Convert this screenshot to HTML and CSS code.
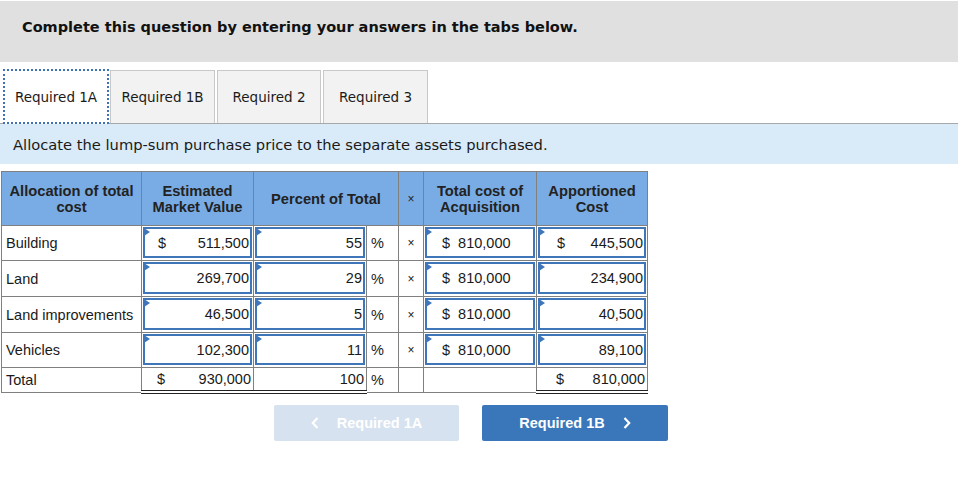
FILE: index.html
```html
<!DOCTYPE html>
<html>
<head>
<meta charset="utf-8">
<link rel="stylesheet" href="styles.css">
</head>
<body>
<div class="page">
  <div class="qhead">Complete this question by entering your answers in the tabs below.</div>
  <div class="tabs">
    <div class="tab active">Required 1A</div>
    <div class="tab t2">Required 1B</div>
    <div class="tab t3">Required 2</div>
    <div class="tab t4">Required 3</div>
  </div>
  <div class="band">Allocate the lump-sum purchase price to the separate assets purchased.</div>
  <table class="grid">
    <colgroup>
      <col class="c1"><col class="c2"><col class="c3"><col class="c4"><col class="c5"><col class="c6"><col class="c7">
    </colgroup>
    <thead>
      <tr>
        <th>Allocation of total<br>cost</th>
        <th>Estimated<br>Market Value</th>
        <th colspan="2">Percent of Total</th>
        <th class="xh">×</th>
        <th>Total cost of<br>Acquisition</th>
        <th>Apportioned<br>Cost</th>
      </tr>
    </thead>
    <tbody>
      <tr class="r35">
        <td class="lbl">Building</td>
        <td class="in"><div class="inp money"><span class="cur">$</span><span>511,500</span></div></td>
        <td class="in"><div class="inp num">55</div></td>
        <td class="pct">%</td>
        <td class="x">×</td>
        <td class="in"><div class="inp tc">$&nbsp; 810,000</div></td>
        <td class="in"><div class="inp money ap"><span class="cur">$</span><span>445,500</span></div></td>
      </tr>
      <tr class="r36">
        <td class="lbl">Land</td>
        <td class="in"><div class="inp num">269,700</div></td>
        <td class="in"><div class="inp num">29</div></td>
        <td class="pct">%</td>
        <td class="x">×</td>
        <td class="in"><div class="inp tc">$&nbsp; 810,000</div></td>
        <td class="in"><div class="inp num">234,900</div></td>
      </tr>
      <tr class="r36">
        <td class="lbl">Land improvements</td>
        <td class="in"><div class="inp num">46,500</div></td>
        <td class="in"><div class="inp num">5</div></td>
        <td class="pct">%</td>
        <td class="x">×</td>
        <td class="in"><div class="inp tc">$&nbsp; 810,000</div></td>
        <td class="in"><div class="inp num">40,500</div></td>
      </tr>
      <tr class="r35">
        <td class="lbl">Vehicles</td>
        <td class="in"><div class="inp num">102,300</div></td>
        <td class="in"><div class="inp num">11</div></td>
        <td class="pct">%</td>
        <td class="x">×</td>
        <td class="in"><div class="inp tc">$&nbsp; 810,000</div></td>
        <td class="in"><div class="inp num">89,100</div></td>
      </tr>
      <tr class="total">
        <td class="lbl">Total</td>
        <td class="dbl"><div class="cell money"><span class="cur">$</span><span>930,000</span></div></td>
        <td class="dbl"><div class="cell num">100</div></td>
        <td class="pct">%</td>
        <td></td>
        <td></td>
        <td class="dbl"><div class="cell money ap"><span class="cur">$</span><span>810,000</span></div></td>
      </tr>
    </tbody>
  </table>
  <div class="nav">
    <button class="btn prev">
      <svg width="8" height="12" viewBox="0 0 8 12"><path d="M6.5 1 L1.8 6 L6.5 11" fill="none" stroke="#fff" stroke-width="2.2"/></svg>
      <span>Required 1A</span>
    </button>
    <button class="btn next">
      <span>Required 1B</span>
      <svg width="8" height="12" viewBox="0 0 8 12"><path d="M1.5 1 L6.2 6 L1.5 11" fill="none" stroke="#fff" stroke-width="2.2"/></svg>
    </button>
  </div>
</div>
</body>
</html>
```

FILE: styles.css
```css
html, body {
  margin: 0;
  padding: 0;
  background: #fff;
}
.page {
  width: 958px;
  font-family: "DejaVu Sans", Verdana, sans-serif;
  color: #111;
}
.qhead {
  height: 61px;
  margin-top: 1px;
  background: #e0e0e0;
  padding-left: 22px;
  box-sizing: border-box;
  display: flex;
  align-items: center;
  font-weight: bold;
  font-size: 14.5px;
  color: #111;
  padding-bottom: 9px;
}
.tabs {
  display: flex;
  margin-top: 8px;
  padding-left: 3px;
  border-bottom: 1px solid #a8a8a8;
  height: 53px;
  box-sizing: content-box;
}
.tab {
  width: 105px;
  height: 53px;
  box-sizing: border-box;
  border: 1px solid #c8c8c8;
  border-bottom: none;
  background: #f2f2f2;
  display: flex;
  align-items: center;
  justify-content: center;
  font-size: 13.5px;
  color: #1a1a1a;
}
.tab.t2 { margin-left: 1px; }
.tab.t3 { margin-left: 2px; width: 104px; }
.tab.t4 { margin-left: 2px; }
.tab.active {
  width: 106px;
  background: #fff;
  border: 2px dotted #3d72b4;
  height: 55px;
  margin-top: -1px;
  margin-bottom: -1px;
}
.band {
  height: 40px;
  background: #d9eaf8;
  display: flex;
  align-items: center;
  padding-left: 13px;
  font-size: 14.7px;
  color: #1a1a1a;
}
.grid {
  margin-top: 7px;
  margin-left: 1px;
  border-collapse: collapse;
  table-layout: fixed;
  width: 647px;
  font-family: "Liberation Sans", Arial, sans-serif;
  font-size: 14.5px;
  color: #1a1a1a;
}
.c1 { width: 140px; }
.c2 { width: 112px; }
.c3 { width: 113px; }
.c4 { width: 32px; }
.c5 { width: 25px; }
.c6 { width: 113px; }
.c7 { width: 111px; }
.grid th, .grid td {
  border: 1px solid #808080;
  padding: 0;
}
.grid th {
  background: #79ace4;
  height: 53px;
  font-weight: bold;
  font-size: 14.7px;
  line-height: 16px;
  color: #222;
  text-align: center;
}
.grid th.xh {
  font-size: 12px;
  font-weight: normal;
}
.lbl { padding-left: 4px !important; }
.in { padding: 1px 1px 2px 1px !important; }
.inp {
  position: relative;
  box-sizing: border-box;
  height: 31px;
  border: 2px solid #3f76ba;
  background: #fff;
  display: flex;
  align-items: center;
  padding-right: 1px;
}
.r36 .inp { height: 32px; }
.inp::before {
  content: "";
  position: absolute;
  left: -1px;
  top: -1px;
  width: 0;
  height: 0;
  border-top: 4px solid transparent;
  border-bottom: 4px solid transparent;
  border-left: 6px solid #3f76ba;
}
.money {
  justify-content: space-between;
  padding-left: 13px;
}
.money.ap { padding-left: 17px; }
.num { justify-content: flex-end; }
.tc {
  padding-left: 15px;
}
.pct {
  padding-left: 4px !important;
}
.x {
  text-align: center;
  font-size: 12px;
}
.cell {
  display: flex;
  align-items: center;
  height: 22px;
  padding-right: 2px;
}
.cell.money { padding-left: 15px; }
.cell.money.ap { padding-left: 19px; }
.dbl { border-bottom: 4px double #222 !important; }
.nav {
  display: flex;
  margin-top: 11px;
  padding-left: 274px;
  gap: 23px;
}
.btn {
  width: 185px;
  height: 36px;
  border: none;
  border-radius: 2px;
  display: flex;
  align-items: center;
  justify-content: center;
  font-family: "Liberation Sans", Arial, sans-serif;
  font-weight: bold;
  font-size: 14.5px;
  color: #fff;
  padding: 0;
  gap: 18px;
}
.btn.prev { background: #d6e2f0; }
.btn.next {
  width: 186px;
  background: #3a76ba;
}
```
